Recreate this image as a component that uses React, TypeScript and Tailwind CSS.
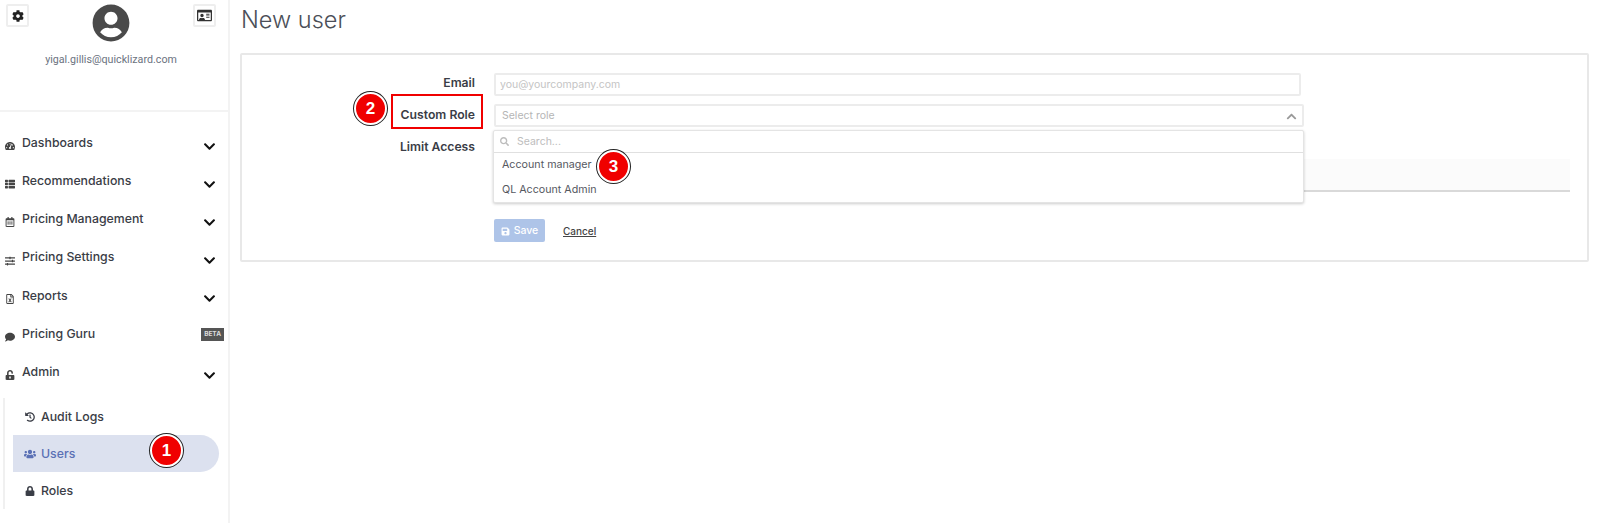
import React from "react";
import {
	FaChevronDown,
	FaChevronUp,
	FaCog,
	FaComment,
	FaHistory,
	FaLock,
	FaRegCalendarAlt,
	FaRegFileExcel,
	FaRegIdCard,
	FaSave,
	FaSearch,
	FaSlidersH,
	FaTachometerAlt,
	FaThList,
	FaUnlockAlt,
	FaUserCircle,
	FaUsers,
} from "react-icons/fa";

const navItems = [
	{ label: "Dashboards", icon: FaTachometerAlt },
	{ label: "Recommendations", icon: FaThList },
	{ label: "Pricing Management", icon: FaRegCalendarAlt },
	{ label: "Pricing Settings", icon: FaSlidersH },
	{ label: "Reports", icon: FaRegFileExcel },
];

const Marker = ({ n, className }: { n: number; className: string }) => (
	<div
		className={`absolute flex h-[33px] w-[33px] items-center justify-center rounded-full border-2 border-white bg-[#f00000] text-[17px] font-bold text-white shadow-[0_0_0_1px_#222] font-['Liberation_Sans',sans-serif] ${className}`}
	>
		{n}
	</div>
);

const NavRow = ({
	label,
	icon: Icon,
	children,
}: {
	label: string;
	icon: React.ComponentType<{ className?: string }>;
	children?: React.ReactNode;
}) => (
	<div className="flex h-[38.2px] items-center pl-[5px] pr-[12px] text-[#3a3d46]">
		<Icon className="h-[10px] w-[10px] shrink-0 text-[#444]" />
		<span className="ml-[7px] flex-1 -translate-y-[3px] text-[12.3px] font-medium">{label}</span>
		{children ?? <FaChevronDown className="h-[13px] w-[13px] text-[#111]" />}
	</div>
);

const SubRow = ({
	label,
	icon: Icon,
	active,
}: {
	label: string;
	icon: React.ComponentType<{ className?: string }>;
	active?: boolean;
}) => (
	<div
		className={`flex h-[37px] items-center pl-[11px] text-[12.3px] font-medium ${
			active ? "rounded-r-[19px] bg-[#dce1ef] text-[#5a70b5]" : "text-[#3a3d46]"
		}`}
	>
		<span className="flex w-[11px] shrink-0 justify-center">
			<Icon className={active ? "h-[12px] w-[12px] shrink-0" : "h-[10px] w-[10px] shrink-0"} />
		</span>
		<span className="ml-[6px]">{label}</span>
	</div>
);

export default function App() {
	return (
		<div className="flex h-[523px] w-[1600px] overflow-hidden bg-white font-['Inter',sans-serif]">
			<aside className="flex w-[230px] shrink-0 flex-col border-r-2 border-[#f3f3f3]">
				<div className="relative h-[112px] border-b-2 border-[#f3f3f3]">
					<div className="flex items-start justify-between pl-[6px] pr-[12px] pt-[4px]">
						<div className="flex h-[23px] w-[23px] items-center justify-center rounded-[2px] border-2 border-[#eeeeee]">
							<FaCog className="h-[12px] w-[12px] text-[#222]" />
						</div>
						<FaUserCircle className="h-[38px] w-[38px] text-[#4a4a4a]" />
						<div className="flex h-[23px] w-[23px] items-center justify-center rounded-[2px] border-2 border-[#eeeeee]">
							<FaRegIdCard className="h-[15px] w-[15px] text-[#333]" />
						</div>
					</div>
					<div className="mt-[10px] pr-[6px] text-center text-[10.7px] text-[#6b7280] font-['Roboto',sans-serif]">
						yigal.gillis@quicklizard.com
					</div>
				</div>
				<nav className="pt-[15px]">
					{navItems.map((item) => (
						<NavRow key={item.label} label={item.label} icon={item.icon} />
					))}
					<NavRow label="Pricing Guru" icon={FaComment}>
						<span className="mr-[-8px] -translate-y-[3px] bg-[#555] px-[3px] py-[2px] text-[6.5px] font-bold leading-[9px] text-[#ddd]">
							BETA
						</span>
					</NavRow>
					<NavRow label="Admin" icon={FaUnlockAlt} />
					<div className="relative mt-[4px] ml-[3px] border-l-2 border-[#f0f0f0] pl-[8px] pr-[9px]">
						<SubRow label="Audit Logs" icon={FaHistory} />
						<SubRow label="Users" icon={FaUsers} active />
						<SubRow label="Roles" icon={FaLock} />
						<Marker n={1} className="left-[145px] top-[36px]" />
					</div>
				</nav>
			</aside>
			<main className="min-w-0 flex-1 pl-[10px] pr-[11px]">
				<h1 className="h-[53px] pl-[1px] pt-[4px] text-[23.5px] font-light leading-[32px] text-[#4b4f58]">New user</h1>
				<section className="h-[209px] rounded-[2px] border-2 border-[#e8e8e8] pt-[18px]">
					<div className="relative flex">
						<div className="-mt-[1px] w-[252px] pr-[19px] text-right text-[12.2px] font-semibold text-[#3a3d46]">
							<div className="flex h-[22px] items-center justify-end">Email</div>
							<div className="mt-[10px] flex h-[22px] items-center justify-end">Custom Role</div>
							<div className="mt-[10px] flex h-[22px] items-center justify-end">Limit Access</div>
						</div>
						<div className="flex-1 pr-[17px]">
							<input
								readOnly
								placeholder="you@yourcompany.com"
								className="block h-[23px] w-[807px] rounded-[2px] border-2 border-[#ececec] px-[4px] text-[10.5px] text-[#333] outline-none placeholder:text-[#c4c4c4]"
							/>
							<div className="mt-[8px] flex h-[23px] w-[810px] items-center justify-between rounded-[2px] border-2 border-[#ececec] pl-[6px] pr-[5px] pt-[1px] text-[10.5px] text-[#b5b5b5]">
								Select role
								<FaChevronUp className="h-[11px] w-[11px] text-[#999]" />
							</div>
							<div className="mt-[32px] h-[33px] w-full border-b-2 border-[#d9d9d9] bg-[#fbfbfb]" />
							<div className="mt-[27px] flex items-center">
								<div className="flex h-[23px] w-[51px] items-center justify-center gap-[4px] rounded-[2px] bg-[#aec4e8] pt-[1px] text-[10.5px] font-medium text-white">
									<FaSave className="h-[9px] w-[9px]" />
									Save
								</div>
								<span className="ml-[18px] pt-[1px] text-[10px] font-medium text-[#444] underline">Cancel</span>
							</div>
						</div>
						<div className="absolute left-[251px] top-[57px] w-[811px] rounded-[2px] border border-[#e4e4e4] bg-white shadow-[0_1px_3px_rgba(0,0,0,0.2)]">
							<div className="flex h-[22px] items-center border-b border-[#e0e0e0] pl-[6px] text-[10.5px] text-[#bdbdbd]">
								<FaSearch className="h-[9px] w-[9px]" />
								<span className="ml-[8px]">Search...</span>
							</div>
							<div className="flex h-[25px] items-center pl-[8px] text-[10.7px] text-[#55585f]">Account manager</div>
							<div className="flex h-[24px] items-center pl-[8px] text-[10.7px] text-[#55585f]">QL Account Admin</div>
						</div>
						<div className="absolute left-[149px] top-[21px] h-[35px] w-[92px] border-2 border-[#f00000]" />
						<Marker n={2} className="left-[112px] top-[19px]" />
						<Marker n={3} className="left-[355px] top-[77px]" />
					</div>
				</section>
			</main>
		</div>
	);
}
